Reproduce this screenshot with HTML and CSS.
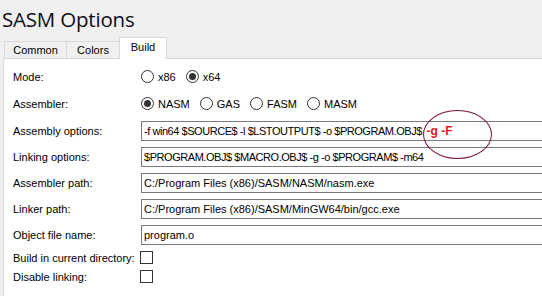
FILE: index.html
```html
<!DOCTYPE html>
<html>
<head>
<meta charset="utf-8">
<link rel="stylesheet" href="styles.css">
</head>
<body>
<h1 class="title">SASM Options</h1>
<div class="tabs">
  <div class="tab">Common</div>
  <div class="tab">Colors</div>
  <div class="tab active">Build</div>
</div>
<div class="panel">
  <div class="form">
    <div class="label">Mode:</div>
    <div class="radios">
      <span class="radio"></span><span class="rtext">x86</span>
      <span class="radio on"></span><span class="rtext">x64</span>
    </div>
    <div class="label">Assembler:</div>
    <div class="radios r2">
      <span class="radio on"></span><span class="rtext">NASM</span>
      <span class="radio"></span><span class="rtext">GAS</span>
      <span class="radio"></span><span class="rtext">FASM</span>
      <span class="radio"></span><span class="rtext">MASM</span>
    </div>
    <div class="label">Assembly options:</div>
    <div class="field tight">-f win64 $SOURCE$ -l $LSTOUTPUT$ -o $PROGRAM.OBJ$ <span class="hl">-g -F</span></div>
    <div class="label">Linking options:</div>
    <div class="field tight">$PROGRAM.OBJ$ $MACRO.OBJ$ -g -o $PROGRAM$ -m64</div>
    <div class="label">Assembler path:</div>
    <div class="field">C:/Program Files (x86)/SASM/NASM/nasm.exe</div>
    <div class="label">Linker path:</div>
    <div class="field">C:/Program Files (x86)/SASM/MinGW64/bin/gcc.exe</div>
    <div class="label">Object file name:</div>
    <div class="field">program.o</div>
    <div class="label">Build in current directory:</div>
    <div class="cbwrap"><span class="check"></span></div>
    <div class="label">Disable linking:</div>
    <div class="cbwrap"><span class="check"></span></div>
  </div>
</div>
<div class="annot"></div>
</body>
</html>
```
FILE: styles.css
```css
html, body {
  margin: 0;
  padding: 0;
}
body {
  background: #f0f0f0;
  width: 542px;
  height: 296px;
  overflow: hidden;
  position: relative;
  font-family: "Liberation Sans", Arial, sans-serif;
  font-size: 11px;
  color: #000;
}
.title {
  margin: 0;
  padding: 7px 0 0 2px;
  height: 31px;
  box-sizing: border-box;
  font-family: "Open Sans", "Noto Sans", sans-serif;
  font-weight: 400;
  font-size: 20.5px;
  line-height: 24px;
  color: #0d0d1a;
  letter-spacing: -0.2px;
}
.tabs {
  display: flex;
  align-items: flex-end;
  padding-left: 4px;
  height: 28px;
  margin-top: -1px;
  position: relative;
  z-index: 1;
}
.tab {
  box-sizing: border-box;
  height: 18px;
  border: 1px solid #d9d9d9;
  border-right: none;
  background: #f0f0f0;
  display: flex;
  align-items: center;
  justify-content: center;
  margin-bottom: -1px;
}
.tab:nth-child(1) { width: 62px; }
.tab:nth-child(2) { width: 53px; }
.tab.active {
  width: 48px;
  height: 22px;
  background: #fff;
  border-right: 1px solid #d9d9d9;
  border-bottom: none;
  padding-bottom: 3px;
}
.panel {
  margin-left: 3px;
  width: 539px;
  height: 238px;
  background: #fff;
  border: 1px solid #d9d9d9;
  border-right: none;
  border-bottom: none;
  box-sizing: border-box;
  padding: 7px 0 0 9px;
  overflow: hidden;
}
.form {
  display: grid;
  grid-template-columns: 128px 1fr;
  grid-template-rows: 21px 22px repeat(5, 20px) 13px 13px;
  row-gap: 6px;
}
.label {
  display: flex;
  align-items: center;
  white-space: nowrap;
}
.radios {
  display: flex;
  align-items: center;
}
.radios.r2 {
  padding-bottom: 1px;
}
.radio {
  box-sizing: border-box;
  width: 13px;
  height: 13px;
  border: 1px solid #333;
  border-radius: 50%;
  background: #fff;
  display: inline-flex;
  align-items: center;
  justify-content: center;
  flex: none;
}
.radio.on::after {
  content: "";
  width: 7px;
  height: 7px;
  border-radius: 50%;
  background: #333;
}
.rtext {
  margin: 0 10px 0 4px;
}
.field {
  box-sizing: border-box;
  height: 20px;
  border: 1px solid #7a7a7a;
  border-right: none;
  padding-left: 2px;
  display: flex;
  align-items: center;
  white-space: pre;
  background: #fff;
  overflow: hidden;
}
.field.tight {
  letter-spacing: -0.45px;
}
.hl {
  color: #e8141e;
  font-weight: 700;
  font-size: 12px;
  letter-spacing: 0;
  margin-left: 2px;
}
.cbwrap {
  display: flex;
  align-items: center;
  margin-left: -1px;
}
.check {
  box-sizing: border-box;
  width: 13px;
  height: 13px;
  border: 1px solid #333;
  background: #fff;
}
.annot {
  position: absolute;
  left: 423px;
  top: 110px;
  width: 69px;
  height: 49px;
  box-sizing: border-box;
  border: 1px solid #7d1535;
  border-radius: 50%;
}
```
